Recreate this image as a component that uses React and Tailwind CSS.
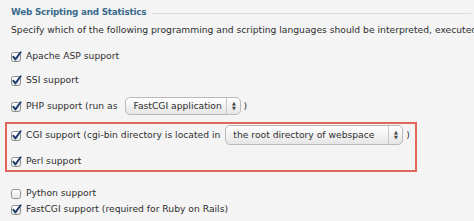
import React from "react";

const Check = ({ checked = true }) => (
  <svg width="11" height="11" viewBox="0 0 11 11" className="shrink-0">
    <defs>
      <linearGradient id="cbg" x1="0" y1="0" x2="0" y2="1">
        <stop offset="0" stopColor="#ffffff" />
        <stop offset="1" stopColor="#e4e4e4" />
      </linearGradient>
    </defs>
    <rect x="0.5" y="1.5" width="9" height="9" rx="2" fill="url(#cbg)" stroke="#8d8d8d" />
    {checked && (
      <path
        d="M2.4 5.8 L4.4 8.4 L9.6 1.2"
        fill="none"
        stroke="#1c3a6c"
        strokeWidth="1.9"
        strokeLinecap="round"
        strokeLinejoin="round"
      />
    )}
  </svg>
);

const Select = ({ label, width, height }) => (
  <div
    className={`flex items-center shrink-0 rounded-[5px] border border-[#b9b9b9] bg-gradient-to-b from-[#ffffff] to-[#e6e6e6] ${width} ${height}`}
  >
    <span className="flex-1 pl-[7px] truncate">{label}</span>
    <span className="flex flex-col items-center justify-center w-[14px] h-full border-l border-[#c8c8c8] text-[5px] leading-[5px] text-[#444]">
      <span>▲</span>
      <span>▼</span>
    </span>
  </div>
);

const Row = ({ checked = true, className = "", children }) => (
  <div className={`flex items-center gap-[3px] h-[16px] ${className}`}>
    <Check checked={checked} />
    <div className="flex items-center pl-[1px] whitespace-nowrap">{children}</div>
  </div>
);

export default function App() {
  return (
    <div
      className="w-[474px] h-[221px] bg-[#f4f4f4] overflow-hidden text-[#2f2f2f] text-[9.2px]"
      style={{ fontFamily: '"DejaVu Sans", Verdana, sans-serif' }}
    >
      {/* Heading */}
      <div className="flex items-center h-[16px] mt-[5px] pl-[11px] pr-[3px]">
        <h1 className="font-bold text-[#3b6b8c] text-[8.8px] whitespace-nowrap tracking-[-0.2px]">
          Web Scripting and Statistics
        </h1>
        <div className="flex-1 h-px bg-[#dadada] ml-[6px]" />
      </div>

      <div className="h-[16px] mt-[1px] pl-[11px] flex items-center whitespace-nowrap">
        Specify which of the following programming and scripting languages should be interpreted, executed
      </div>

      <div className="pl-[11px]">
        <Row className="mt-[10px]">Apache ASP support</Row>
        <Row className="mt-[8px]">SSI support</Row>
        <Row className="mt-[10px]">
          <span>PHP support (run as</span>
          <span className="ml-[8px]">
            <Select label="FastCGI application" width="w-[116px]" height="h-[18px]" />
          </span>
          <span className="ml-[2px]">)</span>
        </Row>
      </div>

      {/* Highlighted */}
      <div className="ml-[5px] w-[412px] mt-[8px] border-2 border-[#e3665b] pl-[4px] pt-[1px] pb-[1px]">
        <div className="flex items-center gap-[3px] h-[20px]">
          <Check />
          <div className="flex items-center pl-[1px] whitespace-nowrap">
            <span>CGI support (cgi-bin directory is located in</span>
            <span className="ml-[5px]">
              <Select label="the root directory of webspace" width="w-[178px]" height="h-[20px]" />
            </span>
            <span className="ml-[3px]">)</span>
          </div>
        </div>
        <Row className="mt-[8px]">Perl support</Row>
      </div>

      <div className="pl-[11px]">
        <Row checked={false} className="mt-[13px]">Python support</Row>
        <Row>FastCGI support (required for Ruby on Rails)</Row>
      </div>
    </div>
  );
}
